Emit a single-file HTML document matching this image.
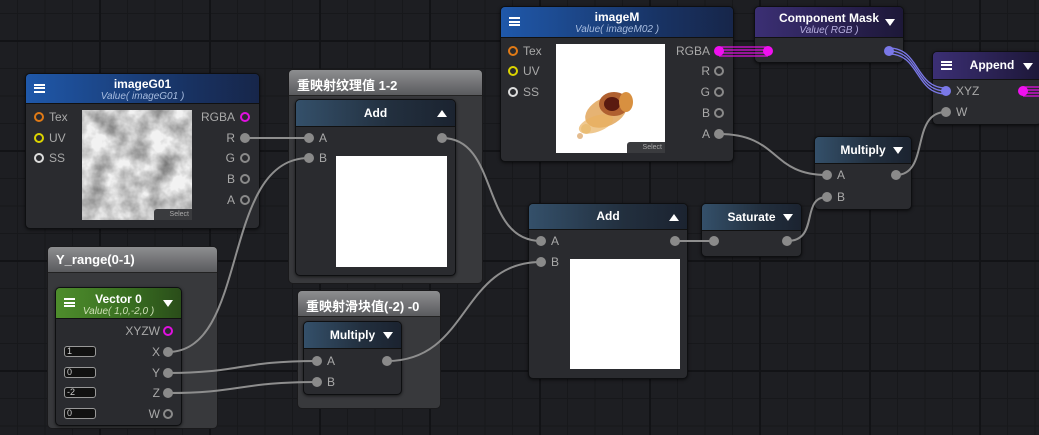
<!DOCTYPE html>
<html><head><meta charset="utf-8">
<style>
*{margin:0;padding:0;box-sizing:border-box}
body{width:1039px;height:435px;overflow:hidden;position:relative;font-family:"Liberation Sans","Noto Sans CJK SC",sans-serif;
background-color:#1d1e22;
background-image:linear-gradient(#121316 2px,transparent 2px),linear-gradient(90deg,#121316 2px,transparent 2px),linear-gradient(#17181b 1px,transparent 1px),linear-gradient(90deg,#17181b 1px,transparent 1px);
background-size:110px 110px,110px 110px,27.5px 27.5px,27.5px 27.5px;
background-position:0 40px,99px 0,0 13px,17px 0;}
.a{position:absolute}
.node{position:absolute;background:#2a2b2f;border:1px solid #0e0f11;border-radius:5px;box-shadow:0 1px 3px rgba(0,0,0,.6)}
.grp{position:absolute;background:#38393c;border:1px solid #1a1a1c;border-radius:5px}
.ghdr{height:26px;border-radius:4px 4px 0 0;background:linear-gradient(#8d8e90,#5a5b5e);color:#fff;font-weight:bold;font-size:13px;padding:5px 0 0 8px;border-bottom:1px solid #222}
.hdr{border-radius:4px 4px 0 0;color:#fff;font-weight:bold;font-size:12px;text-align:center;position:relative;border-bottom:1px solid #111}
.blue{background:linear-gradient(90deg,#1f58aa,#183262 70%,#17264a)}
.dk{background:linear-gradient(90deg,#34506a,#222f3e 60%,#1b2330)}
.pur{background:linear-gradient(90deg,#3b2f74,#261e4a 70%,#1d1838)}
.grn{background:linear-gradient(90deg,#4e8d2c,#386d20 60%,#2a4d1a)}
.sub{font-style:italic;font-weight:normal;font-size:10px;color:#a8bde0;display:block;margin-top:0}
.menu{position:absolute;left:8px;top:50%;width:11px;height:9px;margin-top:-5px;border-top:2px solid #fff;border-bottom:2px solid #fff}
.menu:after{content:"";position:absolute;left:0;right:0;top:1.5px;height:2px;background:#fff}
.tri{position:absolute;right:8px;top:50%;margin-top:-3px;width:0;height:0;border-left:5px solid transparent;border-right:5px solid transparent;border-top:7px solid #fff}
.tri.up{border-top:none;border-bottom:7px solid #fff}
.p{position:absolute;z-index:6;width:10px;height:10px;margin:-5px 0 0 -5px;border-radius:50%;background:#8a8a8a}
.r{background:transparent;border:2px solid #8a8a8a}
.l{position:absolute;font-size:12px;color:#a9a9a9;line-height:14px;margin-top:-7px}
.rt{text-align:right}
.inp{position:absolute;width:32px;height:11px;border:1px solid #999;border-radius:3px;background:#111;color:#ccc;font-size:9px;line-height:9px;padding-left:2px}
.sel{position:absolute;right:0;bottom:0;width:38px;height:11px;background:#3a3b3e;color:#aaa;font-size:7px;text-align:right;padding-right:3px;line-height:11px;border-radius:3px 0 0 0}
</style></head><body>

<svg class="a" style="left:0;top:0;z-index:5" width="1039" height="435">
<g fill="none" stroke="#8e8e8e" stroke-width="2">
<path d="M245 138 L309 138"/>
<path d="M168 352 C250 352 220 158 309 158"/>
<path d="M168 373 C240 373 240 361 317 361"/>
<path d="M168 393 C240 393 240 382 317 382"/>
<path d="M442 138 C500 138 480 241 541 241"/>
<path d="M387 361 C470 361 460 262 541 262"/>
<path d="M675 241 L714 241"/>
<path d="M787 241 C820 241 800 197 827 197"/>
<path d="M719 134 C780 134 770 175 827 175"/>
<path d="M896 175 C930 175 910 112 946 112"/>
</g>
<g fill="none" stroke="#e010e0" stroke-width="1.3">
<path d="M719 47 L768 47"/><path d="M719 50 L768 50"/><path d="M719 53 L768 53"/><path d="M719 56 L768 56"/>
<path d="M1023 87 L1039 87"/><path d="M1023 90 L1039 90"/><path d="M1023 93 L1039 93"/><path d="M1023 96 L1039 96"/>
</g>
<g fill="none" stroke="#7a78e8" stroke-width="1.3">
<path d="M889 48 C920 48 915 88 946 88"/><path d="M889 51 C920 51 915 91 946 91"/><path d="M889 54 C920 54 915 94 946 94"/>
</g>
</svg>

<!-- imageG01 -->
<div class="node" style="left:25px;top:73px;width:235px;height:156px">
<div class="hdr blue" style="height:30px;padding-top:3px">imageG01<span class="sub">Value( imageG01 )</span><div class="menu"></div></div>
</div>
<svg class="a" style="left:82px;top:110px" width="110" height="110"><filter id="n"><feTurbulence type="fractalNoise" baseFrequency="0.045" numOctaves="4" seed="3"/><feColorMatrix type="matrix" values="0 0 0 0 0  0 0 0 0 0  0 0 0 0 0  -1.6 0 0 0 1.15"/></filter><rect width="110" height="110" fill="#f2f2f2"/><rect width="110" height="110" filter="url(#n)" fill="#000" opacity=".55"/></svg>
<div class="a" style="left:82px;top:110px;width:110px;height:110px"><div class="sel">Select</div></div>
<div class="p r" style="left:39px;top:117px;border-color:#e07a16"></div><div class="l" style="left:49px;top:117px">Tex</div>
<div class="p r" style="left:39px;top:138px;border-color:#dcd400"></div><div class="l" style="left:49px;top:138px">UV</div>
<div class="p r" style="left:39px;top:158px;border-color:#ddd"></div><div class="l" style="left:49px;top:158px">SS</div>
<div class="l rt" style="left:195px;width:40px;top:117px">RGBA</div><div class="p r" style="left:245px;top:117px;border-color:#e010e0"></div>
<div class="l rt" style="left:195px;width:40px;top:138px">R</div><div class="p" style="left:245px;top:138px"></div>
<div class="l rt" style="left:195px;width:40px;top:158px">G</div><div class="p r" style="left:245px;top:158px"></div>
<div class="l rt" style="left:195px;width:40px;top:179px">B</div><div class="p r" style="left:245px;top:179px"></div>
<div class="l rt" style="left:195px;width:40px;top:200px">A</div><div class="p r" style="left:245px;top:200px"></div>

<!-- group 1 -->
<div class="grp" style="left:288px;top:69px;width:195px;height:215px"><div class="ghdr">重映射纹理值 1-2</div></div>
<div class="node" style="left:295px;top:99px;width:161px;height:177px">
<div class="hdr dk" style="height:27px;line-height:26px">Add<div class="tri up"></div></div></div>
<div class="a" style="left:336px;top:156px;width:111px;height:111px;background:#fff"></div>
<div class="p" style="left:309px;top:138px"></div><div class="l" style="left:319px;top:138px">A</div>
<div class="p" style="left:309px;top:158px"></div><div class="l" style="left:319px;top:158px">B</div>
<div class="p" style="left:442px;top:138px"></div>

<!-- Y_range -->
<div class="grp" style="left:47px;top:246px;width:171px;height:183px"><div class="ghdr">Y_range(0-1)</div></div>
<div class="node" style="left:55px;top:287px;width:127px;height:139px">
<div class="hdr grn" style="height:31px;padding-top:4px">Vector 0<span class="sub" style="color:#cfe0b8">Value( 1,0,-2,0 )</span><div class="menu"></div><div class="tri"></div></div></div>
<div class="l rt" style="left:110px;width:50px;top:331px">XYZW</div><div class="p r" style="left:168px;top:331px;border-color:#e010e0"></div>
<div class="l rt" style="left:110px;width:50px;top:352px">X</div><div class="p" style="left:168px;top:352px"></div>
<div class="l rt" style="left:110px;width:50px;top:373px">Y</div><div class="p" style="left:168px;top:373px"></div>
<div class="l rt" style="left:110px;width:50px;top:393px">Z</div><div class="p" style="left:168px;top:393px"></div>
<div class="l rt" style="left:110px;width:50px;top:414px">W</div><div class="p r" style="left:168px;top:414px"></div>
<div class="inp" style="left:64px;top:346px">1</div>
<div class="inp" style="left:64px;top:367px">0</div>
<div class="inp" style="left:64px;top:387px">-2</div>
<div class="inp" style="left:64px;top:408px">0</div>

<!-- group 2 -->
<div class="grp" style="left:297px;top:290px;width:144px;height:119px"><div class="ghdr">重映射滑块值(-2) -0</div></div>
<div class="node" style="left:303px;top:321px;width:99px;height:74px">
<div class="hdr dk" style="height:27px;line-height:26px">Multiply<div class="tri"></div></div></div>
<div class="p" style="left:317px;top:361px"></div><div class="l" style="left:327px;top:361px">A</div>
<div class="p" style="left:317px;top:382px"></div><div class="l" style="left:327px;top:382px">B</div>
<div class="p" style="left:387px;top:361px"></div>

<!-- imageM -->
<div class="node" style="left:500px;top:6px;width:234px;height:156px">
<div class="hdr blue" style="height:31px;padding-top:3px">imageM<span class="sub">Value( imageM02 )</span><div class="menu"></div></div></div>
<svg class="a" style="left:556px;top:44px" width="109" height="109"><rect width="109" height="109" fill="#fff"/>
<ellipse cx="50" cy="68" rx="22" ry="14" fill="#e0a050" opacity=".8" transform="rotate(-25 50 68)"/>
<ellipse cx="40" cy="80" rx="18" ry="8" fill="#e8b060" opacity=".7" transform="rotate(-20 40 80)"/>
<ellipse cx="58" cy="60" rx="15" ry="12" fill="#b06030"/>
<ellipse cx="56" cy="60" rx="8" ry="7" fill="#5a1a10"/>
<ellipse cx="70" cy="58" rx="7" ry="10" fill="#d89040"/>
<circle cx="30" cy="85" r="5" fill="#e8b868" opacity=".7"/>
<circle cx="24" cy="92" r="3" fill="#d8a060" opacity=".7"/></svg>
<div class="a" style="left:556px;top:44px;width:109px;height:109px"><div class="sel">Select</div></div>
<div class="p r" style="left:513px;top:51px;border-color:#e07a16"></div><div class="l" style="left:523px;top:51px">Tex</div>
<div class="p r" style="left:513px;top:71px;border-color:#dcd400"></div><div class="l" style="left:523px;top:71px">UV</div>
<div class="p r" style="left:513px;top:92px;border-color:#ddd"></div><div class="l" style="left:523px;top:92px">SS</div>
<div class="l rt" style="left:668px;width:42px;top:51px">RGBA</div><div class="p" style="left:719px;top:51px;background:#f010f0"></div>
<div class="l rt" style="left:668px;width:42px;top:71px">R</div><div class="p r" style="left:719px;top:71px"></div>
<div class="l rt" style="left:668px;width:42px;top:92px">G</div><div class="p r" style="left:719px;top:92px"></div>
<div class="l rt" style="left:668px;width:42px;top:113px">B</div><div class="p r" style="left:719px;top:113px"></div>
<div class="l rt" style="left:668px;width:42px;top:134px">A</div><div class="p" style="left:719px;top:134px"></div>

<!-- Component Mask -->
<div class="node" style="left:754px;top:6px;width:150px;height:57px">
<div class="hdr pur" style="height:31px;padding-top:4px">Component Mask<span class="sub" style="color:#b8b0e0">Value( RGB )</span><div class="tri"></div></div></div>
<div class="p" style="left:768px;top:51px;background:#f010f0"></div>
<div class="p" style="left:889px;top:51px;background:#7a78e8"></div>

<!-- Append -->
<div class="node" style="left:932px;top:51px;width:110px;height:74px">
<div class="hdr pur" style="height:28px;line-height:27px;padding-left:10px">Append<div class="menu"></div><div class="tri"></div></div></div>
<div class="p" style="left:946px;top:91px;background:#7a78e8"></div><div class="l" style="left:956px;top:91px">XYZ</div>
<div class="p" style="left:946px;top:112px"></div><div class="l" style="left:956px;top:112px">W</div>
<div class="p" style="left:1023px;top:91px;background:#f010f0"></div>

<!-- Multiply 2 -->
<div class="node" style="left:814px;top:136px;width:98px;height:74px">
<div class="hdr dk" style="height:27px;line-height:26px">Multiply<div class="tri"></div></div></div>
<div class="p" style="left:827px;top:175px"></div><div class="l" style="left:837px;top:175px">A</div>
<div class="p" style="left:827px;top:197px"></div><div class="l" style="left:837px;top:197px">B</div>
<div class="p" style="left:896px;top:175px"></div>

<!-- Add 2 -->
<div class="node" style="left:528px;top:203px;width:160px;height:176px">
<div class="hdr dk" style="height:26px;line-height:25px">Add<div class="tri up"></div></div></div>
<div class="a" style="left:570px;top:259px;width:110px;height:110px;background:#fff"></div>
<div class="p" style="left:541px;top:241px"></div><div class="l" style="left:551px;top:241px">A</div>
<div class="p" style="left:541px;top:262px"></div><div class="l" style="left:551px;top:262px">B</div>
<div class="p" style="left:675px;top:241px"></div>

<!-- Saturate -->
<div class="node" style="left:701px;top:203px;width:101px;height:54px">
<div class="hdr dk" style="height:27px;line-height:26px">Saturate<div class="tri"></div></div></div>
<div class="p" style="left:714px;top:241px"></div>
<div class="p" style="left:787px;top:241px"></div>
</body></html>
